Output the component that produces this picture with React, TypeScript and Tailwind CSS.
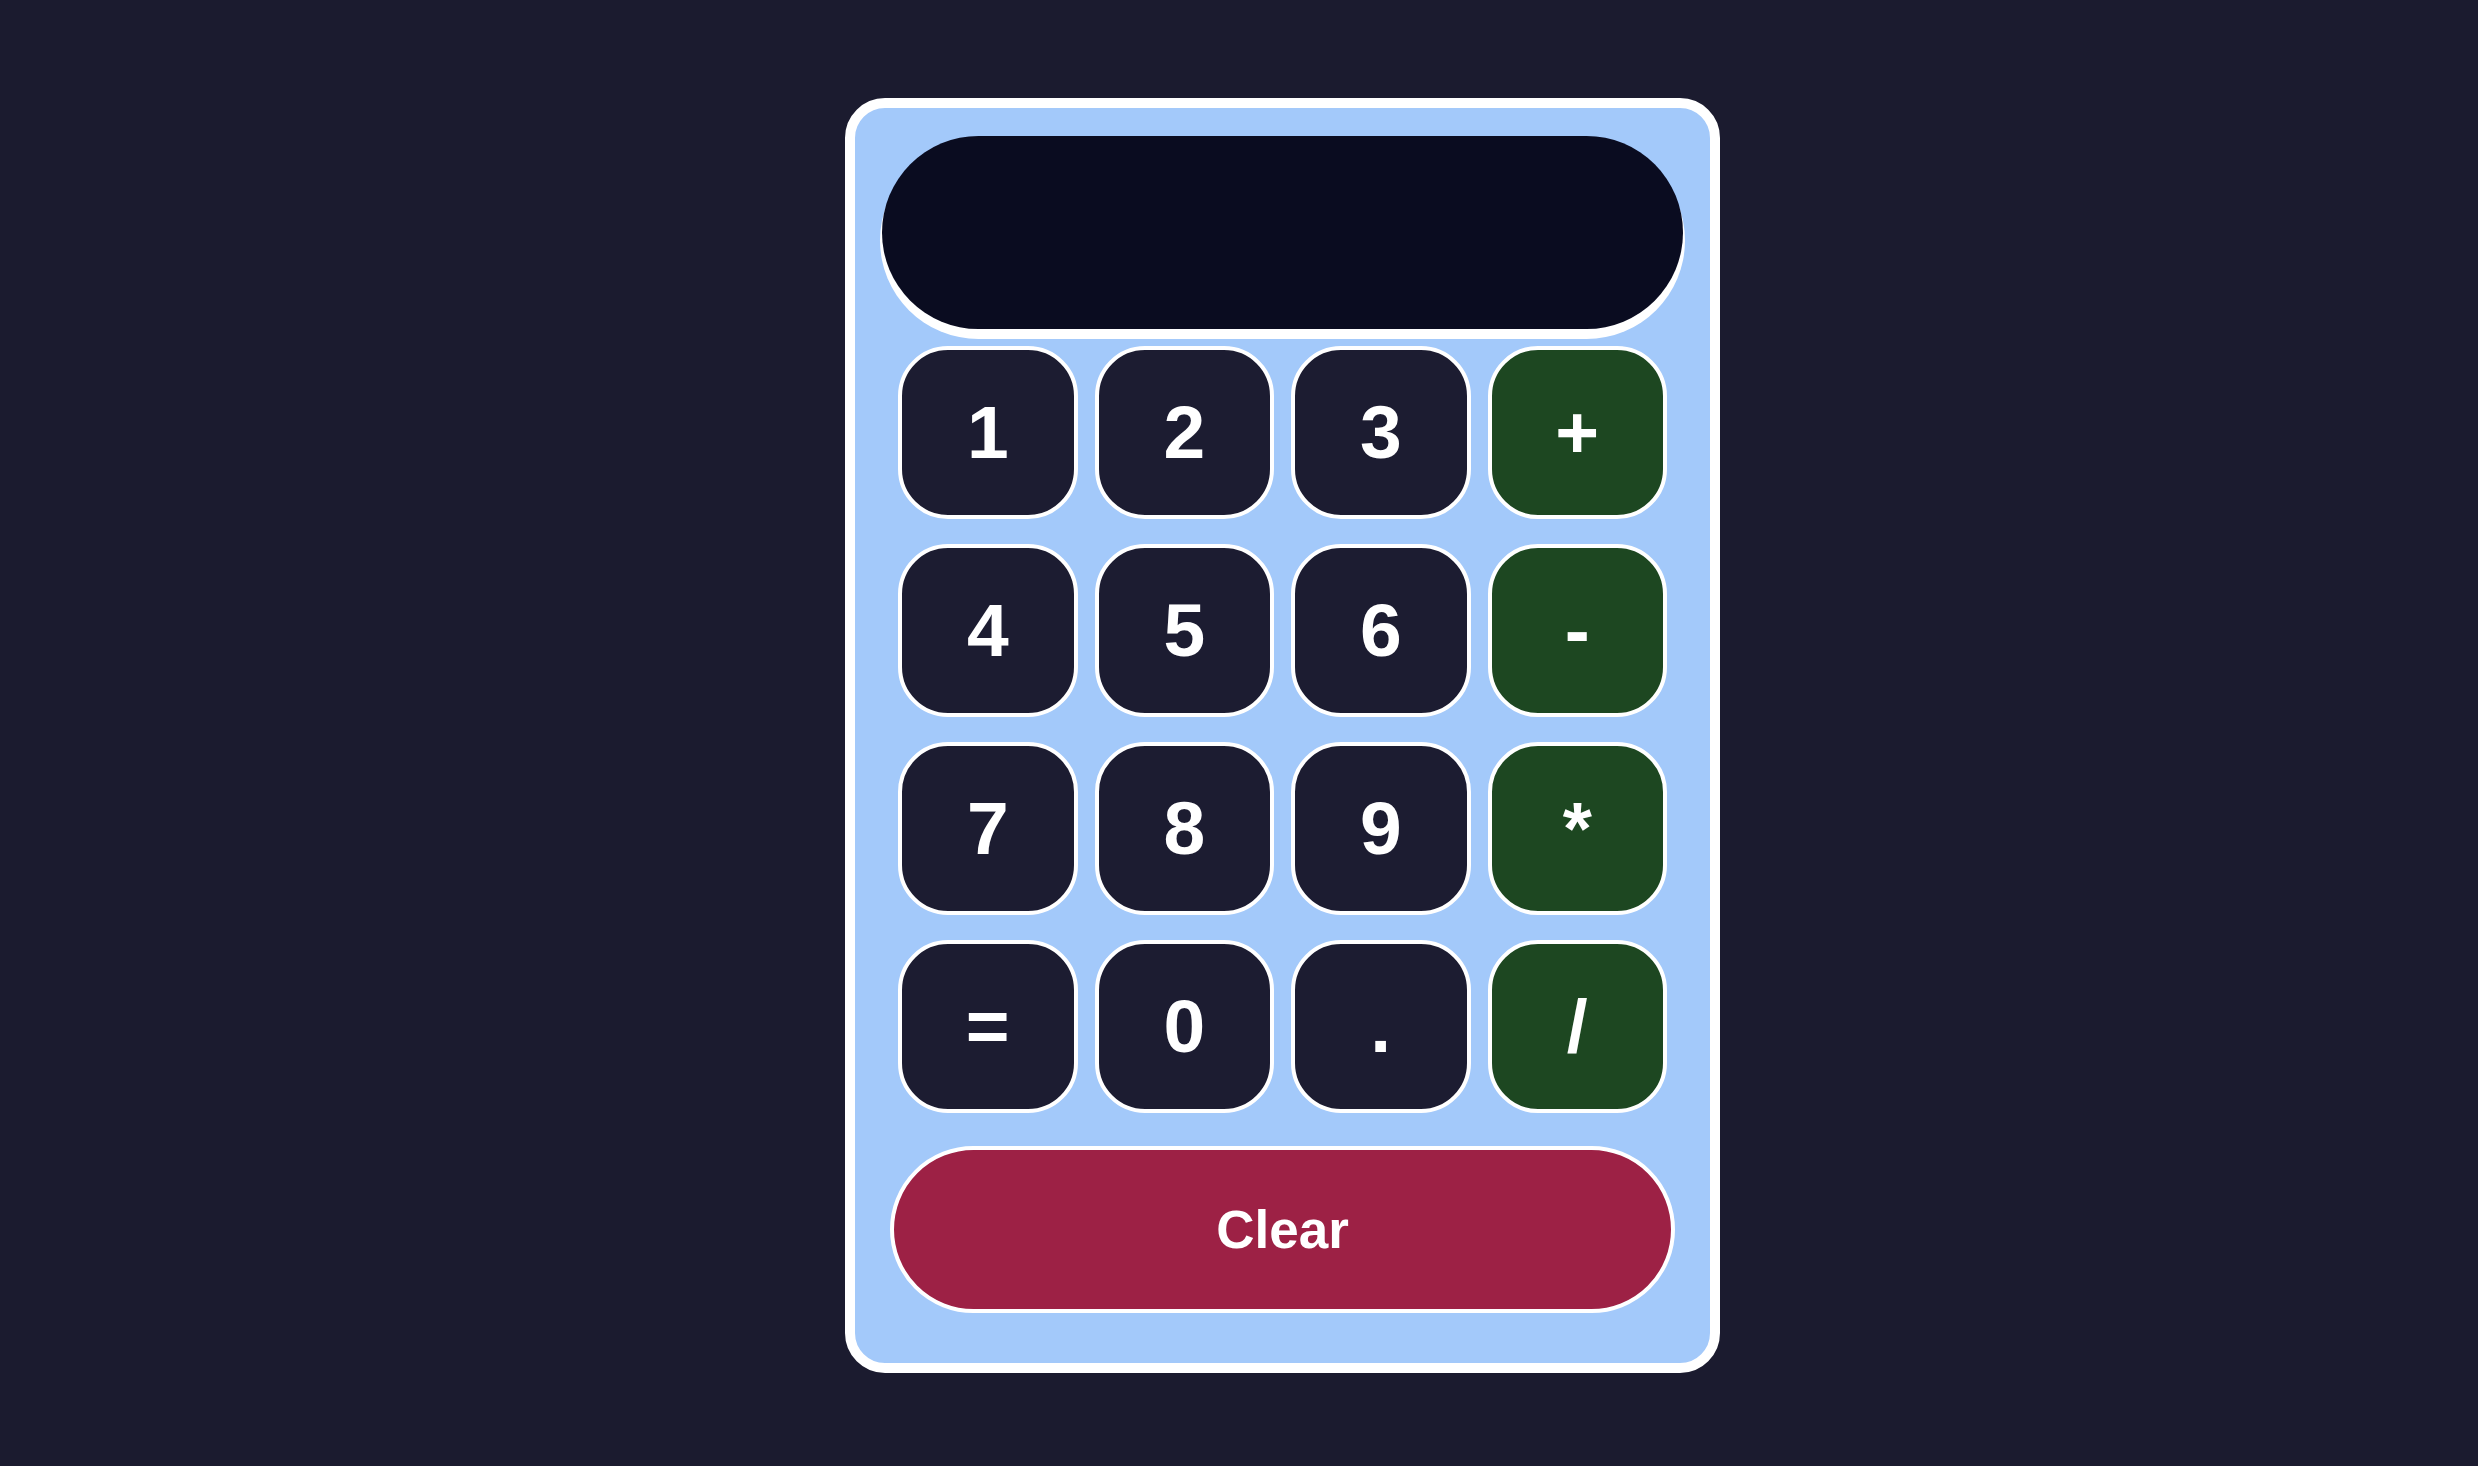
import { useState } from "react";

const keys = [
  { label: "1", op: false },
  { label: "2", op: false },
  { label: "3", op: false },
  { label: "+", op: true },
  { label: "4", op: false },
  { label: "5", op: false },
  { label: "6", op: false },
  { label: "-", op: true },
  { label: "7", op: false },
  { label: "8", op: false },
  { label: "9", op: false },
  { label: "*", op: true },
  { label: "=", op: false },
  { label: "0", op: false },
  { label: ".", op: false },
  { label: "/", op: true },
];

export default function App() {
  const [display, setDisplay] = useState("");

  const press = (key: string) => {
    if (key === "=") {
      try {
        // eslint-disable-next-line no-new-func
        const result = Function(`"use strict"; return (${display || "0"})`)();
        setDisplay(String(result));
      } catch {
        setDisplay("Error");
      }
      return;
    }
    setDisplay((d) => (d === "Error" ? key : d + key));
  };

  return (
    <div className="min-h-screen bg-[#1b1b2f] flex justify-center pt-[98px] pl-[87px] font-['Liberation_Sans',Arial,sans-serif]">
      <div className="w-[875px] self-start border-[10px] border-white rounded-[40px] bg-[#a3c9fa] pt-[28px] pb-[50px] px-[27px] flex flex-col">
        <div className="h-[193px] rounded-full bg-[#0a0c20] shadow-[0_8px_0_2px_#ffffff] flex items-center justify-end px-16 text-white text-[72px] font-bold overflow-hidden">
          {display}
        </div>

        <div className="mt-[17px] px-[16px] grid grid-cols-4 gap-x-[17px] gap-y-[25px]">
          {keys.map((k) => (
            <button
              key={k.label}
              onClick={() => press(k.label)}
              className={`h-[173px] rounded-[50px] border-4 border-white flex items-center justify-center text-white text-[75px] font-bold leading-none ${
                k.op ? "bg-[#1d4721]" : "bg-[#1c1c31]"
              }`}
            >
              {k.label}
            </button>
          ))}
        </div>

        <button
          onClick={() => setDisplay("")}
          className="mt-[33px] mx-[8px] h-[167px] rounded-full border-4 border-white bg-[#9d2145] text-white text-[53px] font-bold"
        >
          Clear
        </button>
      </div>
    </div>
  );
}
